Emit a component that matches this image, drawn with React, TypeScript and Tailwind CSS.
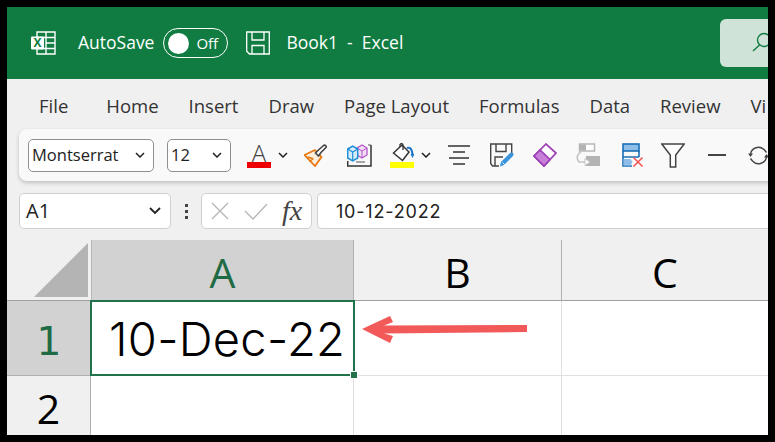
const tabs = ["File", "Home", "Insert", "Draw", "Page Layout", "Formulas", "Data", "Review", "Vi"];

function Chevron({ className = "" }: { className?: string }) {
  return (
    <svg width="10" height="6" viewBox="0 0 10 6" fill="none" className={className}>
      <path d="M1 1l4 4 4-4" stroke="#222" strokeWidth="1.5" />
    </svg>
  );
}

function ExcelLogo() {
  return (
    <svg width="25" height="24" viewBox="0 0 25 24" fill="none" className="shrink-0">
      <path d="M6 1h18v22H6z" stroke="#fff" strokeWidth="1.4" />
      <path d="M15 1v22M15 6.500h9M15 12h9M15 17.500h9M6 17.500h9M6 6.500h9" stroke="#fff" strokeWidth="1.4" />
      <rect x="0" y="5.500" width="13" height="13" rx="1" fill="#fff" />
      <text x="6.500" y="16" textAnchor="middle" fontSize="12" fontWeight="700" fill="#107c41" fontFamily="Open Sans, sans-serif">
        X
      </text>
    </svg>
  );
}

function SaveIcon() {
  return (
    <svg width="24" height="24" viewBox="0 0 24 24" fill="none" className="shrink-0">
      <path d="M.7 1h22.600v22H3.500L.7 20.200z" stroke="#fff" strokeWidth="1.3" />
      <path d="M6 1v8h12V1M6 23v-8.500h12V23" stroke="#fff" strokeWidth="1.3" />
    </svg>
  );
}

function FontColorIcon() {
  return (
    <div className="flex flex-col items-center w-[24px] shrink-0">
      <span className="text-[24px] leading-[19px] font-light text-[#444]">A</span>
      <div className="w-[24px] h-[6px] bg-[#ee0000]" />
    </div>
  );
}

function BrushIcon() {
  return (
    <svg width="24" height="23" viewBox="0 0 24 23" fill="none" className="shrink-0">
      <path d="M0.500 11l10.500-5 6.500 7L11 22z" fill="#fdeedd" stroke="#e8780f" strokeWidth="1.800" />
      <path d="M3.500 13l5 1.500M5.500 17.500l4-3" stroke="#e8780f" strokeWidth="1.400" />
      <path d="M11.500 9l3-3 5-4.500c1.400-1 3.400.6 2.400 2L17 8.500 14.500 12z" fill="#fff" stroke="#444" strokeWidth="1.600" />
    </svg>
  );
}

function CubesIcon() {
  return (
    <svg width="25" height="23" viewBox="0 0 25 23" fill="none" className="shrink-0">
      <path d="M24 1v21H.7v-5" stroke="#333" strokeWidth="1.500" />
      <path d="M21 1h3M9 18h9" stroke="#555" strokeWidth="1" />
      <path d="M10 4l5-3 5 3v7l-5 3-5-3z" fill="#f3dff5" stroke="#b455c8" strokeWidth="1.300" />
      <path d="M10 4l5 3 5-3M15 7v7" stroke="#b455c8" strokeWidth="1" />
      <path d="M.7 5l5-3 5 3v9l-5 3-5-3z" fill="#d7ecfa" stroke="#1f8fd6" strokeWidth="1.500" />
      <path d="M.7 5l5 3 5-3M5.700 8v9" stroke="#1f8fd6" strokeWidth="1.200" />
    </svg>
  );
}

function FillIcon() {
  return (
    <div className="flex flex-col w-[24px] shrink-0">
      <svg width="24" height="19" viewBox="0 0 24 19" fill="none">
        <path d="M3.500 10L12 2l7 7-6.500 8.500z" fill="#fff" stroke="#333" strokeWidth="1.500" />
        <path d="M10 4V1.500c1-1.500 3-1 3 .5v5" stroke="#333" strokeWidth="1.300" />
        <path d="M17 5c3-1 5 1 5.500 6" stroke="#1f77c9" strokeWidth="2.200" />
        <path d="M20.500 11h4l-2 4z" fill="#1f77c9" />
      </svg>
      <div className="w-[24px] h-[6px] bg-[#ffff00]" />
    </div>
  );
}

function AlignIcon() {
  return (
    <svg width="22" height="20" viewBox="0 0 22 20" fill="none" className="shrink-0">
      <path d="M0 1h22M5 7h12M1 13h20M5 19h12" stroke="#333" strokeWidth="1.400" />
    </svg>
  );
}

function SaveEditIcon() {
  return (
    <svg width="24" height="24" viewBox="0 0 24 24" fill="none" className="shrink-0">
      <path d="M9 23H2.500L.7 20.500V1h21v10" stroke="#444" strokeWidth="1.400" />
      <path d="M6 1v7.500h10V1M5 23v-9h8" stroke="#444" strokeWidth="1.400" />
      <path d="M10 23.500l1-4.500 9-9c1-.8 2.200-.8 3 0s.6 2 0 3l-9 9z" fill="#3b94d9" />
      <path d="M12.500 19.500l2 2" stroke="#fff" strokeWidth="1" />
    </svg>
  );
}

function EraserIcon() {
  return (
    <svg width="24" height="24" viewBox="0 0 24 24" fill="none" className="shrink-0">
      <path d="M1 13L13 1l10 9-12 13z" fill="#fff" stroke="#9c3fb5" strokeWidth="1.700" />
      <path d="M1 13l6-6 10 9.500L11 23z" fill="#c77fd8" stroke="#9c3fb5" strokeWidth="1.700" />
    </svg>
  );
}

function MergeIcon() {
  return (
    <svg width="24" height="24" viewBox="0 0 24 24" fill="none" className="shrink-0">
      <rect x="3.500" y="1" width="15" height="7" fill="#fff" stroke="#b3b3b3" strokeWidth="1.400" />
      <rect x="4" y="1.500" width="6" height="6" fill="#b3b3b3" />
      <rect x="10" y="13" width="14" height="10" fill="#b3b3b3" />
      <path d="M5 9C1 11 0 15 3 19h6" stroke="#c4c4c4" strokeWidth="1.700" />
      <path d="M9 15.500l5 3.500-5 3.500z" fill="#fff" stroke="#c4c4c4" />
    </svg>
  );
}

function ClearFilterIcon() {
  return (
    <svg width="22" height="24" viewBox="0 0 22 24" fill="none" className="shrink-0">
      <rect x="1" y="1" width="16" height="7" fill="#8ebde8" stroke="#1a6fb8" strokeWidth="1.600" />
      <path d="M1 8v15h9M17 8v6M1 14h16" stroke="#1a6fb8" strokeWidth="1.600" />
      <path d="M1.500 16h7l2 3-2 3.500h-7z" fill="#8ebde8" />
      <path d="M11.500 14.500l9 9M20.500 14.500l-9 9" stroke="#f05252" strokeWidth="1.500" />
    </svg>
  );
}

function FunnelIcon() {
  return (
    <svg width="24" height="25" viewBox="0 0 24 25" fill="none" className="shrink-0">
      <path d="M.8 1h22.400l-8.500 11v12H9.300V12z" fill="#fff" stroke="#444" strokeWidth="1.500" />
    </svg>
  );
}

function RefreshIcon() {
  return (
    <svg width="21" height="21" viewBox="0 0 21 21" fill="none" className="shrink-0">
      <path d="M2.500 10a8 8 0 0 1 14-5l2 2.500M18.500 11a8 8 0 0 1-14 5L2.500 13.500" stroke="#444" strokeWidth="1.400" />
      <path d="M0 8.500h5L2.500 12zM21 12.500h-5l2.500-3.500z" fill="#444" />
    </svg>
  );
}

export default function App() {
  return (
    <div className="w-[775px] h-[442px] bg-black p-[7px] overflow-hidden font-['Open_Sans',sans-serif]">
      <div className="w-[761px] h-[428px] flex flex-col bg-[#f0f0f0] overflow-hidden">
        {/* title bar */}
        <div className="h-[72px] shrink-0 bg-[#107c41] flex items-center text-white pl-[24px]">
          <ExcelLogo />
          <span className="ml-[22px] text-[17.500px] leading-none">AutoSave</span>
          <div className="ml-[9px] w-[65px] h-[30px] rounded-full border border-white flex items-center pl-[4px] gap-[7px]">
            <div className="w-[21px] h-[21px] rounded-full bg-white" />
            <span className="text-[15px] leading-none">Off</span>
          </div>
          <div className="ml-[18px]">
            <SaveIcon />
          </div>
          <span className="ml-[16px] text-[17.500px] leading-none whitespace-pre">Book1  -  Excel</span>
          <div className="ml-auto w-[48px] h-[48px] bg-[#cfe3d8] rounded-l-[6px] flex items-center pl-[32px] overflow-hidden">
            <svg width="20" height="24" viewBox="0 0 20 24" fill="none" className="shrink-0">
              <circle cx="12" cy="9" r="6.500" stroke="#107c41" strokeWidth="1.400" />
              <path d="M7.500 14L1 20" stroke="#107c41" strokeWidth="1.400" />
            </svg>
          </div>
        </div>

        {/* ribbon tabs */}
        <div className="h-[50px] shrink-0 flex items-center gap-[30px] pl-[32px] pt-[3px] text-[18.500px] text-[#333] whitespace-nowrap">
          {tabs.map((t, i) => (
            <span key={t} className={i === 1 ? "ml-[8px]" : ""}>
              {t}
            </span>
          ))}
        </div>

        {/* toolbar */}
        <div className="ml-[12px] w-[780px] h-[52px] shrink-0 bg-[#f9f9f9] rounded-l-[8px] shadow-[0_2px_4px_rgba(0,0,0,0.2)] flex items-center pl-[9px]">
          <div className="w-[126px] h-[33px] bg-white border border-[#8f8f8f] rounded-[5px] flex items-center justify-between pl-[3px] pr-[8px] text-[#222] text-[16.500px]">
            <span>Montserrat</span>
            <Chevron />
          </div>
          <div className="ml-[13px] w-[64px] h-[33px] bg-white border border-[#8f8f8f] rounded-[5px] flex items-center justify-between pl-[3px] pr-[8px] text-[#222] text-[16.500px]">
            <span>12</span>
            <Chevron />
          </div>
          <div className="ml-[16px]">
            <FontColorIcon />
          </div>
          <Chevron className="ml-[7px]" />
          <div className="ml-[16px]">
            <BrushIcon />
          </div>
          <div className="ml-[19px]">
            <CubesIcon />
          </div>
          <div className="ml-[18px]">
            <FillIcon />
          </div>
          <Chevron className="ml-[7px]" />
          <div className="ml-[17px]">
            <AlignIcon />
          </div>
          <div className="ml-[20px]">
            <SaveEditIcon />
          </div>
          <div className="ml-[19px]">
            <EraserIcon />
          </div>
          <div className="ml-[19px]">
            <MergeIcon />
          </div>
          <div className="ml-[22px]">
            <ClearFilterIcon />
          </div>
          <div className="ml-[17px]">
            <FunnelIcon />
          </div>
          <div className="ml-[23px] w-[18px] h-[2px] bg-[#444] shrink-0" />
          <div className="ml-[22px]">
            <RefreshIcon />
          </div>
        </div>

        {/* formula bar */}
        <div className="mt-[12px] h-[36px] shrink-0 flex items-center pl-[12px]">
          <div className="w-[152px] h-[36px] bg-white border border-[#d0d0d0] rounded-[5px] flex items-center justify-between pl-[6px] pr-[9px] text-[20px] text-[#222]">
            <span>A1</span>
            <svg width="12" height="8" viewBox="0 0 12 8" fill="none">
              <path d="M1 1l5 5 5-5" stroke="#222" strokeWidth="1.800" />
            </svg>
          </div>
          <div className="ml-[14px] flex flex-col gap-[3px]">
            <div className="w-[3px] h-[3px] bg-[#444]" />
            <div className="w-[3px] h-[3px] bg-[#444]" />
            <div className="w-[3px] h-[3px] bg-[#444]" />
          </div>
          <div className="ml-[13px] w-[111px] h-[36px] bg-white border border-[#d0d0d0] rounded-[5px] flex items-center pl-[9px]">
            <svg width="18" height="18" viewBox="0 0 18 18" fill="none" className="shrink-0">
              <path d="M1 1l16 16M17 1L1 17" stroke="#b5b5b5" strokeWidth="1.300" />
            </svg>
            <svg width="24" height="17" viewBox="0 0 24 17" fill="none" className="ml-[15px] shrink-0">
              <path d="M1 8l8 8L23 1" stroke="#b5b5b5" strokeWidth="1.300" />
            </svg>
            <span className="ml-[14px] text-[28px] leading-none italic text-[#444] font-['Liberation_Serif',serif]">fx</span>
          </div>
          <div className="ml-[5px] flex-1 h-[36px] bg-white border border-[#d0d0d0] border-r-0 rounded-l-[5px] flex items-center pl-[18px] text-[18px] text-[#222] tracking-[0.8px] font-['Inter',sans-serif]">
            10-12-2022
          </div>
        </div>

        {/* sheet */}
        <div className="relative mt-[11px] flex-1 grid grid-cols-[84px_262px_208px_207px] grid-rows-[61px_75px_1fr] text-black text-[41px] leading-none">
          <div className="border-b border-[#a0a0a0] flex items-end justify-end pr-[3px] pb-[3px]">
            <svg width="54" height="54" viewBox="0 0 54 54">
              <path d="M54 0v54H0z" fill="#b4b4b4" />
            </svg>
          </div>
          <div className="bg-[#d2d2d2] border-l border-[#b8b8b8] border-b border-b-[#a0a0a0] flex items-center justify-center pt-[5px] text-[#1f6b45]">
            A
          </div>
          <div className="border-l border-[#b0b0b0] border-b border-b-[#a0a0a0] flex items-center justify-center pt-[5px]">
            B
          </div>
          <div className="border-l border-[#b0b0b0] border-b border-b-[#a0a0a0] flex items-center justify-center pt-[5px]">
            C
          </div>

          <div className="bg-[#d2d2d2] border-b border-[#b0b0b0] flex items-center justify-center pt-[6px] text-[39px] text-[#1f6b45] font-['DejaVu_Sans',sans-serif]">
            1
          </div>
          <div className="bg-white border-b border-[#e0e0e0] flex items-center pl-[18px] text-[47px] font-light font-['Inter',sans-serif] tracking-[0.3px]">
            10-Dec-22
          </div>
          <div className="bg-white border-l border-b border-[#e0e0e0]" />
          <div className="bg-white border-l border-b border-[#e0e0e0]" />

          <div className="border-r border-[#b0b0b0] flex items-center justify-center pt-[6px]">2</div>
          <div className="bg-white" />
          <div className="bg-white border-l border-[#e0e0e0]" />
          <div className="bg-white border-l border-[#e0e0e0]" />

          {/* selected cell */}
          <div className="absolute left-[83px] top-[60px] w-[265px] h-[76px] border-[2px] border-[#1f7249] pointer-events-none">
            <div className="absolute right-[-4px] bottom-[-4px] w-[6px] h-[6px] bg-[#1f7249] outline outline-1 outline-white" />
          </div>

          {/* arrow annotation */}
          <svg width="170" height="40" viewBox="0 0 170 40" className="absolute left-[354px] top-[65px]" fill="none">
            <path d="M1 24L29 11L32 17L23 20.500L166 20V27L23 28.500L32 31L29 38Z" fill="#f25a5a" />
          </svg>
        </div>
      </div>
    </div>
  );
}
